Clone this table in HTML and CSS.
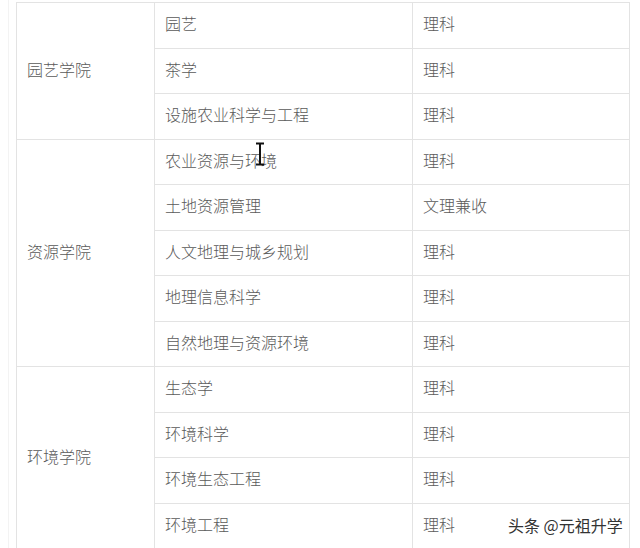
FILE: index.html
```html
<!DOCTYPE html>
<html lang="zh">
<head>
<meta charset="utf-8">
<link rel="stylesheet" href="styles.css">
</head>
<body>
<div class="frame">
<table class="majors">
  <colgroup><col class="c1"><col class="c2"><col class="c3"></colgroup>
  <tr><td rowspan="3">园艺学院</td><td>园艺</td><td>理科</td></tr>
  <tr><td>茶学</td><td>理科</td></tr>
  <tr><td>设施农业科学与工程</td><td>理科</td></tr>
  <tr><td rowspan="5">资源学院</td><td>农业资源与环境</td><td>理科</td></tr>
  <tr><td>土地资源管理</td><td>文理兼收</td></tr>
  <tr><td>人文地理与城乡规划</td><td>理科</td></tr>
  <tr><td>地理信息科学</td><td>理科</td></tr>
  <tr><td>自然地理与资源环境</td><td>理科</td></tr>
  <tr><td rowspan="4">环境学院</td><td>生态学</td><td>理科</td></tr>
  <tr><td>环境科学</td><td>理科</td></tr>
  <tr><td>环境生态工程</td><td>理科</td></tr>
  <tr><td>环境工程</td><td>理科</td></tr>
</table>
</div>
<svg class="cursor" width="12" height="24" viewBox="0 0 12 24"><path d="M2 1.5h8M6 1.5v21M2 22.5h8" stroke="#111" stroke-width="2" fill="none"/></svg>
<div class="watermark">头条 @元祖升学</div>
</body>
</html>
```
FILE: styles.css
```css
html, body {
  margin: 0;
  padding: 0;
  background: #fff;
}
body {
  width: 640px;
  height: 548px;
  overflow: hidden;
  position: relative;
  font-family: "Liberation Serif", "Noto Sans CJK SC", serif;
}
.frame {
  margin-left: 8px;
  padding-left: 8px;
  padding-top: 2px;
  border-left: 1px solid #f3f3f3;
}
.majors {
  border-collapse: collapse;
  table-layout: fixed;
  width: 613px;
  margin-left: -1px;
}
.c1 { width: 138px; }
.c2 { width: 258px; }
.c3 { width: 217px; }
.majors td {
  border: 1px solid #e3e3e3;
  height: 45.5px;
  padding: 0 10px 4px;
  box-sizing: border-box;
  font-size: 16px;
  color: #5a5a5a;
  font-weight: 300;
  vertical-align: middle;
  white-space: nowrap;
}
.cursor {
  position: absolute;
  left: 254px;
  top: 142px;
}
.watermark {
  position: absolute;
  left: 508px;
  top: 514px;
  font-family: "Noto Sans CJK SC", sans-serif;
  font-size: 16px;
  line-height: 22px;
  color: #333;
  text-shadow: 0 0 2px #fff, 0 0 2px #fff;
}
```
